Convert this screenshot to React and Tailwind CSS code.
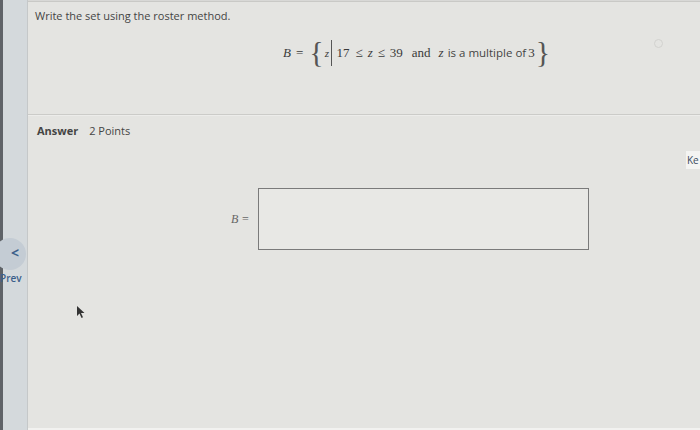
import React from 'react';

const serif = { fontFamily: '"Liberation Serif", "DejaVu Serif", serif' };

function Equation() {
  return (
    <div className="flex items-center text-[#3a3a3a] text-[13px]" style={serif}>
      <span className="italic">B</span>
      <span className="ml-[5px]">=</span>
      <span className="ml-[6px] text-[30px] leading-none font-light text-[#555] -mt-[3px]">{'{'}</span>
      <span className="italic ml-[1px] text-[11px]">z</span>
      <span className="ml-[2px] w-[1.5px] h-[26px] bg-[#555]" />
      <span className="ml-[4px]">17</span>
      <span className="ml-[6px]">≤</span>
      <span className="ml-[5px] italic">z</span>
      <span className="ml-[5px]">≤</span>
      <span className="ml-[5px]">39</span>
      <span className="ml-[9px]">and</span>
      <span className="ml-[8px] italic">z</span>
      <span className="ml-[4px] text-[11.5px] text-[#444]" style={{ fontFamily: '"Open Sans", sans-serif' }}>is a multiple of</span>
      <span className="ml-[2px]">3</span>
      <span className="ml-[1px] text-[30px] leading-none font-light text-[#555] -mt-[3px]">{'}'}</span>
    </div>
  );
}

export default function App() {
  return (
    <div className="w-[700px] h-[430px] overflow-hidden flex bg-[#e4e4e1]" style={{ fontFamily: '"Open Sans", sans-serif' }}>
      {/* left rail */}
      <div className="relative z-10 w-[28px] h-full flex bg-[#d4d9dc] border-r border-[#c5c8c9]">
        <div className="w-[3px] h-full bg-[#5f6368]" />
        <div className="absolute left-[-6px] top-[238px] w-[32px] h-[32px] rounded-full bg-[#c4ccd4] flex items-center justify-center">
          <span className="text-[#3b5f8a] text-[14px] font-bold leading-none ml-[10px] -mt-[2px]">{'<'}</span>
        </div>
        <span className="absolute left-[0px] top-[271px] text-[10px] font-semibold text-[#3b5f8a]">Prev</span>
      </div>

      {/* main panel */}
      <div className="relative flex-1 h-full flex flex-col">
        <div className="h-[2px] bg-[#d8d8d6] border-b border-[#c9c9c6]" />
        <div className="pl-[7px] pt-[6px] text-[11px] text-[#444]">Write the set using the roster method.</div>
        <div className="pl-[255px] mt-[15px]">
          <Equation />
        </div>
        <div className="mt-[47px] h-[2px] border-t border-[#cbcbc8] bg-[#ececea]" />
        <div className="pl-[9px] mt-[7px] flex items-baseline text-[11px] text-[#444]">
          <span className="font-bold">Answer</span>
          <span className="ml-[11px]">2 Points</span>
        </div>
        <div className="pl-[203px] mt-[49px] flex items-center">
          <span className="italic text-[12px] text-[#666]" style={serif}>B =</span>
          <div className="ml-[9px] w-[331px] h-[62px] border border-[#7a7a7a] bg-[#e8e8e5]" />
        </div>

        {/* mouse pointer */}
        <svg className="absolute left-[48px] top-[305px]" width="10" height="14" viewBox="0 0 10 14">
          <path d="M1 1 L1 11 L3.5 8.5 L5.5 13 L7 12.3 L5 8 L8.5 8 Z" fill="#333" />
        </svg>

        {/* faint circle */}
        <div className="absolute left-[626px] top-[39px] w-[9px] h-[9px] rounded-full border border-[#d2d2cf]" />

        {/* right keypad tab */}
        <div className="absolute right-0 top-[151px] w-[14px] h-[18px] bg-[#f4f4f2] flex items-center pl-[1px]">
          <span className="text-[10px] text-[#3a4a60] leading-none whitespace-nowrap">Ke</span>
        </div>

        <div className="absolute left-0 right-0 bottom-0 h-[2px] bg-[#f2f2f0]" />
      </div>
    </div>
  );
}
